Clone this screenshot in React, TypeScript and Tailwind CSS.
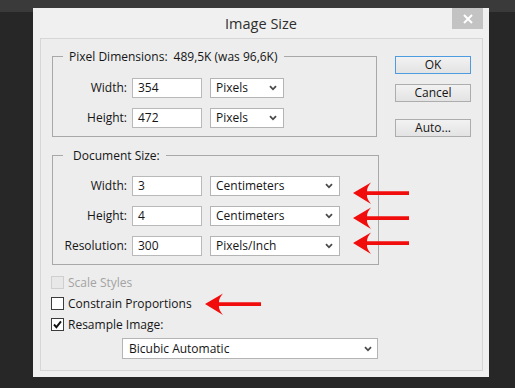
import React from "react";

const Chevron = () => (
  <svg width="8" height="6" viewBox="0 0 8 6" className="shrink-0">
    <path d="M1 1.2 L4 4.3 L7 1.2" fill="none" stroke="#4a4a4a" strokeWidth="1.8" />
  </svg>
);

const Select = ({ label, w }: { label: string; w: string }) => (
  <div className={`${w} h-[20px] bg-white border border-[#b4b4b4] flex items-center justify-between pl-[5px] pr-[6px]`}>
    <span className="leading-none text-[#151515]">{label}</span>
    <Chevron />
  </div>
);

const Input = ({ value }: { value: string }) => (
  <div className="w-[70px] h-[20px] bg-white border border-[#b9b9b9] flex items-center pl-[5px]">
    <span className="leading-none text-[#151515]">{value}</span>
  </div>
);

const Row = ({ label, value, unit, sw }: { label: string; value: string; unit: string; sw: string }) => (
  <div className="flex items-center h-[20px]">
    <div className="w-[79px] text-right pr-[5px] text-[#151515] leading-none">{label}</div>
    <Input value={value} />
    <div className="w-[8px]" />
    <Select label={unit} w={sw} />
  </div>
);

const Arrow = ({ left, top }: { left: number; top: number }) => (
  <svg
    width="60"
    height="26"
    viewBox="0 0 60 26"
    className="absolute"
    style={{ left, top }}
  >
    <path
      d="M1 12 L19 1.5 Q14.5 7 15 10.2 L57 10.2 L57 14 L15 14 Q14.5 17.5 19 23 Z"
      fill="#f20d0d"
    />
  </svg>
);

const Btn = ({ label, primary }: { label: string; primary?: boolean }) => (
  <div
    className={`w-[76px] h-[18px] flex items-center justify-center border bg-gradient-to-b from-[#f2f2f2] to-[#e3e3e3] ${
      primary ? "border-[#4d9be0]" : "border-[#adadad]"
    }`}
  >
    <span className="leading-none text-[#151515]">{label}</span>
  </div>
);

const CheckRow = ({
  label,
  checked,
  disabled,
}: {
  label: string;
  checked?: boolean;
  disabled?: boolean;
}) => (
  <div className="flex items-center h-[13px]">
    <div
      className={`w-[13px] h-[13px] border flex items-center justify-center ${
        disabled ? "border-[#cfcfcf] bg-[#e8e8e8]" : "border-[#3c3c3c] bg-white"
      }`}
    >
      {checked && (
        <svg width="11" height="11" viewBox="0 0 11 11">
          <path d="M2 5.5 L4.4 8.2 L9 2.3" fill="none" stroke="#111" strokeWidth="1.9" />
        </svg>
      )}
    </div>
    <span className={`ml-[4px] leading-none ${disabled ? "text-[#a3a3a3]" : "text-[#151515]"}`}>{label}</span>
  </div>
);

export default function App() {
  return (
    <div className="relative w-[515px] h-[388px] bg-[#272727] overflow-hidden font-['Open_Sans',sans-serif] text-[12px]">
      <div className="absolute left-0 top-0 w-full h-[12px] bg-[#3a3a3a]" />
      <div className="relative ml-[33px] pt-[8px]">
        <div className="w-[456px] h-[369px] bg-[#f0f0f0] flex flex-col">
          {/* title bar */}
          <div className="h-[30px] flex items-start relative">
            <div className="flex-1 text-center text-[14.5px] leading-[30px] text-[#2e2e2e] pt-[1px]">Image Size</div>
            <div className="absolute right-[6px] top-0 w-[31px] h-[21px] bg-[#c3c3c3] flex items-center justify-center">
              <svg width="10" height="10" viewBox="0 0 10 10">
                <path d="M1 1 L9 9 M9 1 L1 9" stroke="#fff" strokeWidth="2" />
              </svg>
            </div>
          </div>
          {/* panel */}
          <div className="ml-[7px] w-[443px] h-[333px] border border-[#d6d6d6] bg-[#ededed] flex">
            {/* left column */}
            <div className="pl-[10px] w-[338px] flex flex-col">
              {/* Pixel dimensions */}
              <div className="relative ml-[1px] mt-[17px] w-[325px] border border-[#a8a8a8] pt-[21px] pb-[8px] flex flex-col gap-[10px]">
                <div className="absolute left-[10px] -top-[8px] px-[6px] bg-[#ededed] leading-[16px] text-[#151515] flex">
                  <span>Pixel Dimensions:</span>
                  <span className="ml-[6px]">489,5K (was 96,6K)</span>
                </div>
                <Row label="Width:" value="354" unit="Pixels" sw="w-[74px]" />
                <Row label="Height:" value="472" unit="Pixels" sw="w-[74px]" />
              </div>
              {/* Document size */}
              <div className="relative ml-[1px] mt-[18px] w-[327px] border border-[#a8a8a8] pt-[20px] pb-[8px] flex flex-col gap-[10px]">
                <div className="absolute left-[10px] -top-[8px] pl-[10px] pr-[6px] bg-[#ededed] leading-[16px] text-[#151515]">
                  Document Size:
                </div>
                <Row label="Width:" value="3" unit="Centimeters" sw="w-[130px]" />
                <Row label="Height:" value="4" unit="Centimeters" sw="w-[130px]" />
                <Row label="Resolution:" value="300" unit="Pixels/Inch" sw="w-[130px]" />
              </div>
              {/* checkboxes */}
              <div className="mt-[11px] flex flex-col gap-[8px]">
                <CheckRow label="Scale Styles" disabled />
                <CheckRow label="Constrain Proportions" />
                <CheckRow label="Resample Image:" checked />
              </div>
              <div className="mt-[7px] ml-[71px]">
                <div className="w-[256px] h-[21px] bg-white border border-[#b4b4b4] flex items-center justify-between pl-[6px] pr-[5px]">
                  <span className="leading-none text-[#151515]">Bicubic Automatic</span>
                  <Chevron />
                </div>
              </div>
            </div>
            {/* right column */}
            <div className="ml-[16px] mt-[17px] flex flex-col">
              <Btn label="OK" primary />
              <div className="h-[10px]" />
              <Btn label="Cancel" />
              <div className="h-[17px]" />
              <Btn label="Auto..." />
            </div>
          </div>
        </div>
      </div>
      <Arrow left={352} top={181} />
      <Arrow left={352} top={206} />
      <Arrow left={352} top={231} />
      <Arrow left={204} top={292} />
    </div>
  );
}
